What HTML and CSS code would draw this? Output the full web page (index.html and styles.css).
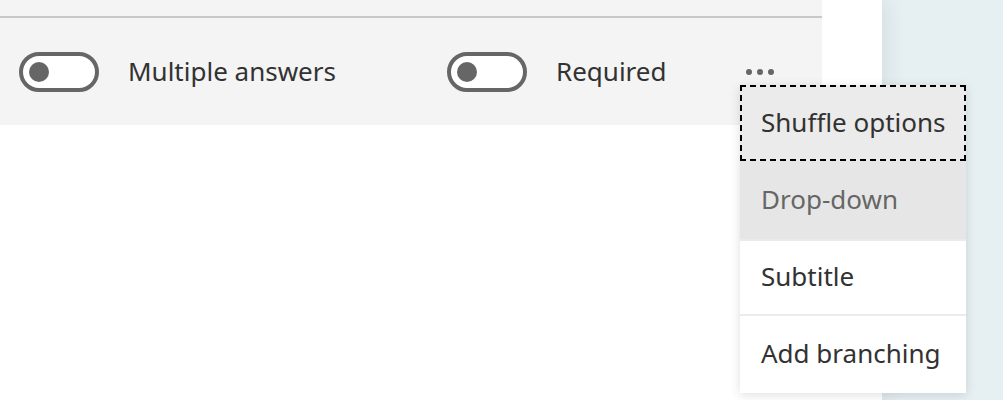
FILE: index.html
```html
<!DOCTYPE html>
<html>
<head>
<meta charset="utf-8">
<link rel="stylesheet" href="styles.css">
</head>
<body>
<div class="page">
  <div class="card">
    <div class="panel">
      <div class="divider"></div>
      <div class="options">
        <div class="opt opt-multi">
          <span class="toggle"><span class="knob"></span></span>
          <span class="label">Multiple answers</span>
        </div>
        <div class="opt opt-req">
          <span class="toggle"><span class="knob"></span></span>
          <span class="label">Required</span>
        </div>
        <div class="more"><span class="dot"></span><span class="dot"></span><span class="dot"></span></div>
      </div>
    </div>
  </div>
  <div class="side"></div>
  <ul class="menu">
    <li class="item focused">Shuffle options</li>
    <li class="item hovered">Drop-down</li>
    <li class="item">Subtitle</li>
    <li class="item">Add branching</li>
  </ul>
</div>
</body>
</html>
```

FILE: styles.css
```css
html, body {
  margin: 0;
  padding: 0;
}
body {
  background: #e6eff2;
  font-family: "Noto Sans", "Open Sans", sans-serif;
  color: #323232;
  overflow: hidden;
}
.page {
  display: flex;
  height: 400px;
  position: relative;
}
.card {
  width: 882px;
  height: 400px;
  background: #ffffff;
  box-shadow: 0 0 22px rgba(60, 90, 100, 0.14);
  position: relative;
  z-index: 1;
}
.panel {
  width: 822px;
  height: 125px;
  background: #f4f4f4;
  padding-top: 16px;
  box-sizing: border-box;
}
.divider {
  height: 2px;
  background: #c8c8c8;
}
.options {
  display: flex;
  align-items: center;
  padding-left: 19px;
  margin-top: 34px;
  height: 40px;
}
.opt {
  display: flex;
  align-items: center;
  gap: 29px;
}
.opt-multi {
  width: 428px;
}
.opt-req {
  width: 299px;
}
.toggle {
  width: 80px;
  height: 40px;
  box-sizing: border-box;
  border: 4px solid #666666;
  border-radius: 20px;
  background: #ffffff;
  display: flex;
  align-items: center;
  padding-left: 6px;
  flex-shrink: 0;
}
.knob {
  width: 20px;
  height: 20px;
  border-radius: 50%;
  background: #666666;
}
.label {
  font-size: 26px;
  line-height: 40px;
  white-space: nowrap;
  color: #323232;
  position: relative;
  top: -1px;
}
.more {
  display: flex;
  gap: 5px;
  align-items: center;
}
.dot {
  width: 6px;
  height: 6px;
  border-radius: 50%;
  background: #666666;
}
.side {
  flex: 1;
}
.menu {
  position: absolute;
  left: 740px;
  top: 85px;
  width: 226px;
  margin: 0;
  padding: 0;
  list-style: none;
  background: #ffffff;
  box-shadow: 0 2px 10px rgba(0, 0, 0, 0.13);
  z-index: 2;
}
.item {
  height: 77px;
  box-sizing: border-box;
  padding-left: 21px;
  padding-bottom: 3px;
  display: flex;
  align-items: center;
  font-size: 26px;
  color: #323232;
  white-space: nowrap;
}
.item.focused {
  height: 76px;
  background: #ebebeb;
  border: 2px dashed #000000;
  padding-left: 19px;
}
.item.hovered {
  height: 78px;
  background: #e6e6e6;
  color: #666666;
}
.item + .item:not(.hovered) {
  border-top: 2px solid #ebebeb;
}
.item:nth-child(3) {
  border-top: none;
  height: 75px;
}
.item:last-child {
  height: 79px;
}
```
